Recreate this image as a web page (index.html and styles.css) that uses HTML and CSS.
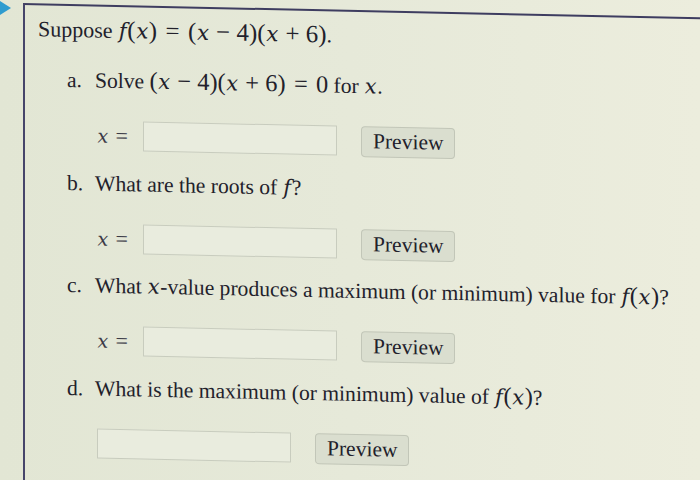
FILE: index.html
```html
<!DOCTYPE html>
<html>
<head>
<meta charset="utf-8">
<link rel="stylesheet" href="styles.css">
</head>
<body>
<div class="page">
  <span class="marker"></span>
  <div class="frame">
    <p class="title">Suppose <span class="m"><i>f</i>(<i>x</i>)<span class="rel">=</span>(<i>x</i><span class="bin">−</span>4)(<i>x</i><span class="bin">+</span>6)</span>.</p>
    <ol class="parts">
      <li class="part">
        <div class="q"><span class="mk">a.</span><span>Solve <span class="m">(<i>x</i><span class="bin">−</span>4)(<i>x</i><span class="bin">+</span>6)<span class="rel">=</span>0</span> for <span class="m"><i>x</i></span>.</span></div>
        <div class="ans"><span class="lbl"><i>x</i><span class="rel">=</span></span><span class="inp"></span><button class="btn">Preview</button></div>
      </li>
      <li class="part">
        <div class="q"><span class="mk">b.</span><span>What are the roots of <span class="m"><i>f</i></span>?</span></div>
        <div class="ans"><span class="lbl"><i>x</i><span class="rel">=</span></span><span class="inp"></span><button class="btn">Preview</button></div>
      </li>
      <li class="part">
        <div class="q"><span class="mk">c.</span><span>What <span class="m"><i>x</i></span>-value produces a maximum (or minimum) value for <span class="m"><i>f</i>(<i>x</i>)</span>?</span></div>
        <div class="ans"><span class="lbl"><i>x</i><span class="rel">=</span></span><span class="inp"></span><button class="btn">Preview</button></div>
      </li>
      <li class="part">
        <div class="q"><span class="mk">d.</span><span>What is the maximum (or minimum) value of <span class="m"><i>f</i>(<i>x</i>)</span>?</span></div>
        <div class="ans"><span class="inp"></span><button class="btn">Preview</button></div>
      </li>
    </ol>
  </div>
</div>
</body>
</html>
```
FILE: styles.css
```css
html, body {
  margin: 0;
  padding: 0;
  height: 100%;
  overflow: hidden;
}
body {
  background: linear-gradient(90deg, #e2e6d4 0%, #e6e9d9 50%, #eceddd 100%);
  font-family: "Liberation Serif", "Times New Roman", serif;
  color: #22212b;
}
.page {
  position: relative;
  padding: 3px 0 0 23px;
  height: 100%;
  box-sizing: border-box;
}
.marker {
  position: absolute;
  left: 0;
  top: 1px;
  width: 0;
  height: 0;
  border-top: 7px solid transparent;
  border-bottom: 7px solid transparent;
  border-left: 11px solid #2f9ccf;
}
.frame {
  border-top: 2px solid #3e3d60;
  border-left: 2px solid #46456a;
  height: 600px;
  transform: skewY(1.2deg);
  transform-origin: 0 0;
  padding: 9px 0 0 13px;
  box-sizing: border-box;
}
.title {
  margin: 0;
  font-size: 22px;
  line-height: 30px;
  height: 30px;
  white-space: nowrap;
}
.m {
  font-family: "Liberation Serif", "Times New Roman", serif;
  font-size: 1.13em;
  line-height: 1;
}
.m i, .lbl i {
  font-family: "DejaVu Serif", serif;
  font-style: italic;
  font-size: 0.86em;
  line-height: 1;
  padding: 0 0.03em;
}
.rel {
  padding: 0 0.34em;
}
.bin {
  padding: 0 0.26em;
}
.parts {
  list-style: none;
  margin: 20px 0 0 0;
  padding: 0 0 0 29px;
}
.part {
  margin: 0 0 16.5px 0;
}
.q {
  display: flex;
  font-size: 21.6px;
  line-height: 30px;
  height: 30px;
  white-space: nowrap;
}
.mk {
  width: 28px;
  flex: none;
}
.ans {
  display: flex;
  align-items: flex-start;
  margin: 25px 0 0 0;
  padding-left: 30px;
  height: 31px;
}
.lbl {
  width: 46px;
  font-family: "Liberation Serif", "Times New Roman", serif;
  font-size: 22px;
  line-height: 30px;
  height: 30px;
  color: #3b3a46;
}
.lbl .rel {
  padding: 0 0 0 0.3em;
}
.inp {
  width: 194px;
  height: 30px;
  box-sizing: border-box;
  border: 1px solid #c8ccbe;
  background: #e9ecde;
}
.btn {
  margin-left: 24px;
  height: 31px;
  padding: 0 11px;
  font-family: "Liberation Serif", "Times New Roman", serif;
  font-size: 21.5px;
  line-height: 29px;
  color: #22212b;
  background: #dadecf;
  border: 1px solid #c2c6b8;
  border-radius: 4px;
}
```
